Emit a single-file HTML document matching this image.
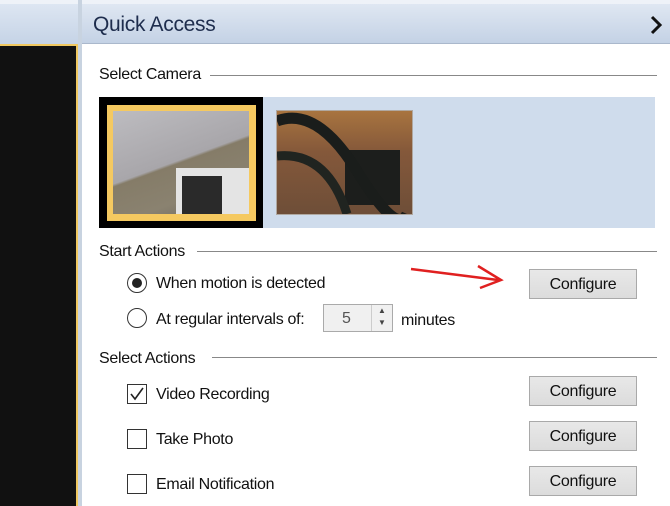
<!DOCTYPE html>
<html><head><style>
*{margin:0;padding:0;box-sizing:border-box}
body{width:670px;height:506px;overflow:hidden;background:#fff;font-family:"Liberation Sans",Arial,sans-serif;position:relative;color:#111}
.a{position:absolute}
.t{position:absolute;font-size:16px;line-height:18px;white-space:nowrap;letter-spacing:-0.3px}
.ln{position:absolute;height:1px;background:#888}
.btn{position:absolute;width:108px;height:30px;background:linear-gradient(#e8e8e8,#dcdcdc);border:1px solid #a9a9a9;font-size:16px;text-align:center;line-height:30px;letter-spacing:-0.3px}
.cb{position:absolute;width:20px;height:20px;border:1px solid #333;background:#fff}
</style></head><body>
<div class="a" style="left:0;top:0;width:670px;height:4px;background:#eef2f8"></div>
<div class="a" style="left:0;top:4px;width:78px;height:40px;background:linear-gradient(#dde6f2,#c5d3e6)"></div>
<div class="a" style="left:78px;top:0;width:4px;height:506px;background:#c8d3e0"></div>
<div class="a" style="left:82px;top:4px;width:588px;height:40px;background:linear-gradient(#dfe7f2,#c4d2e5);border-bottom:1px solid #aab8cc"></div>
<div class="a" style="left:0;top:44px;width:78px;height:462px;background:#111;border-top:2px solid #f0c860;border-right:2px solid #f0c860"></div>
<div class="t" style="left:93px;top:13px;font-size:21px;line-height:24px;color:#1e2d4d">Quick Access</div>
<svg class="a" style="left:649px;top:14px" width="14" height="22"><path d="M3 3 L11 11 L3 19" stroke="#111" stroke-width="3" fill="none"/></svg>

<div class="t" style="left:99px;top:66px">Select Camera</div>
<div class="ln" style="left:210px;top:75px;width:447px"></div>
<div class="a" style="left:99px;top:97px;width:556px;height:131px;background:#cfdcec"></div>
<div class="a" style="left:99px;top:97px;width:164px;height:131px;background:#000"></div>
<div class="a" style="left:107px;top:105px;width:149px;height:116px;background:#f5c960"></div>
<div class="a" style="left:113px;top:111px;width:136px;height:103px;background:linear-gradient(160deg,#bdbcc0 0%,#a8a6aa 48%,#857c68 50%,#8a8270 75%,#6a665e 100%)"></div>
<div class="a" style="left:176px;top:168px;width:73px;height:46px;background:#e4e4e4"></div>
<div class="a" style="left:182px;top:176px;width:40px;height:38px;background:#2a2a2a"></div>
<div class="a" style="left:276px;top:110px;width:137px;height:105px;background:#b0a8a0;padding:1px"><div style="width:100%;height:100%;background:linear-gradient(#a8743f,#84583a 40%,#6e4e38 100%)"></div></div>
<div class="a" style="left:345px;top:150px;width:55px;height:55px;background:#1c1e1c"></div>
<svg class="a" style="left:277px;top:111px" width="135" height="103"><path d="M0 10 Q40 -5 80 60 T130 103" stroke="#1a1d1b" stroke-width="11" fill="none"/><path d="M0 45 Q50 40 70 103" stroke="#202420" stroke-width="9" fill="none"/></svg>

<div class="t" style="left:99px;top:243px">Start Actions</div>
<div class="ln" style="left:197px;top:251px;width:460px"></div>
<div class="a" style="left:127px;top:273px;width:20px;height:20px;border:1px solid #333;border-radius:50%;background:#fff"></div>
<div class="a" style="left:132px;top:278px;width:10px;height:10px;border-radius:50%;background:#222"></div>
<div class="t" style="left:156px;top:275px">When motion is detected</div>
<svg class="a" style="left:408px;top:262px" width="100" height="28"><path d="M3 7 L90 18 M70 4 L93 18 L72 26" stroke="#e02020" stroke-width="2.5" fill="none"/></svg>
<div class="btn" style="left:529px;top:269px">Configure</div>
<div class="a" style="left:127px;top:308px;width:20px;height:20px;border:1px solid #333;border-radius:50%;background:#fff"></div>
<div class="t" style="left:156px;top:311px">At regular intervals of:</div>
<div class="a" style="left:323px;top:304px;width:70px;height:28px;border:1px solid #aaa;background:#f0f0f0"></div>
<div class="t" style="left:342px;top:310px;color:#555">5</div>
<div class="a" style="left:371px;top:305px;width:21px;height:26px;border-left:1px solid #ccc;font-size:8px;line-height:12px;text-align:center;color:#444">▲<br>▼</div>
<div class="t" style="left:401px;top:312px">minutes</div>

<div class="t" style="left:99px;top:350px">Select Actions</div>
<div class="ln" style="left:212px;top:357px;width:445px"></div>
<div class="cb" style="left:127px;top:384px"></div>
<svg class="a" style="left:127px;top:384px" width="20" height="20"><path d="M4 10 L8 15 L16 4" stroke="#222" stroke-width="1.6" fill="none"/></svg>
<div class="t" style="left:156px;top:386px">Video Recording</div>
<div class="btn" style="left:529px;top:376px">Configure</div>
<div class="cb" style="left:127px;top:429px"></div>
<div class="t" style="left:156px;top:431px">Take Photo</div>
<div class="btn" style="left:529px;top:421px">Configure</div>
<div class="cb" style="left:127px;top:474px"></div>
<div class="t" style="left:156px;top:476px">Email Notification</div>
<div class="btn" style="left:529px;top:466px">Configure</div>
</body></html>
